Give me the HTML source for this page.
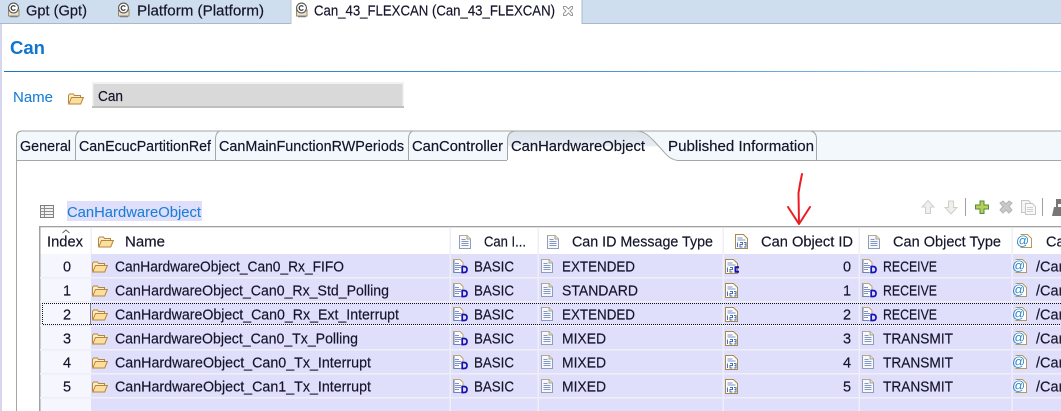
<!DOCTYPE html>
<html><head><meta charset="utf-8"><title>Can</title>
<style>
html,body{margin:0;padding:0;background:#fff;width:1061px;height:411px;overflow:hidden}
svg{display:block}
text{font-family:"Liberation Sans",sans-serif;font-size:14.5px;fill:#14142a;stroke:#14142a;stroke-width:.18px}
.b{fill:#1a7fd8;stroke:#1a7fd8;stroke-width:.08px}
.a{font-size:13px;fill:#2f86c8;stroke:none}
</style></head><body>
<svg width="1061" height="411" viewBox="0 0 1061 411" xmlns="http://www.w3.org/2000/svg">
<defs>
<linearGradient id="ln" x1="0" x2="1" y1="0" y2="0"><stop offset="0" stop-color="#1c76c4"/><stop offset=".6" stop-color="#4f97d6"/><stop offset="1" stop-color="#a8cbea"/></linearGradient>
<linearGradient id="at" x1="0" x2="0" y1="0" y2="1"><stop offset="0" stop-color="#dce4ec"/><stop offset=".5" stop-color="#e6ecf2"/><stop offset=".52" stop-color="#fff"/><stop offset="1" stop-color="#fff"/></linearGradient>
<symbol id="folder" width="16" height="12" viewBox="0 0 16 12"><path d="M.5 10.500V2.500l1-1.500h4l1 1.500h6v2" fill="#fbeecb" stroke="#b9853a"/><path d="M.8 11l2.600-6.500h12L12.700 11z" fill="#fbdf9f" stroke="#b9853a"/></symbol>
<symbol id="doc" width="12" height="14" viewBox="0 0 12 14"><path d="M.5.500h7.500l3.500 3.500v9.500H.5z" fill="#f7f8fc" stroke="#8f9dbb"/><path d="M.5.500h7.500l3.500 3.500" fill="none" stroke="#b8aa86"/><path d="M8 .5v3.500h3.500" fill="#e6e3d6" stroke="#a9a388"/><path d="M2.500 4.500h4M2.500 6.500h7M2.500 8.500h7M2.500 10.500h7" stroke="#8297c4"/></symbol>
<symbol id="docd" width="15" height="15" viewBox="0 0 15 15"><path d="M.5.500h6.500l3 3v10H.5z" fill="#fbfbff" stroke="#c2a468"/><path d="M2 4.500h4M2 6.500h6M2 8.500h6M2 10.500h4" stroke="#7e92c4"/><path d="M1 1v12.500h6" stroke="#6a85c4" fill="none"/><path d="M9.200 7.500h1.800q3 0 3 3t-3 3H9.200z" fill="#e0dffb" stroke="#1212b8" stroke-width="1.700"/></symbol>
<symbol id="num" width="13" height="15" viewBox="0 0 13 15"><path d="M.5.500h8l4 4v10H.5z" fill="#fdfdfb" stroke="#a5894e"/><path d="M2.500 4h5M2.500 6h8" stroke="#7e92c4"/><path d="M2.500 8.500v4.500M5 8.500h2.500v2H5v2.500h2.500M9 8.500h2v2H9.500h1.500v2.500H9" fill="none" stroke="#4c6fb5"/></symbol>
<symbol id="numc" width="15" height="15" viewBox="0 0 15 15"><path d="M.5.500h8l4 4v10H.5z" fill="#fdfdfb" stroke="#a5894e"/><path d="M2.500 4h5M2.500 6h8" stroke="#7e92c4"/><path d="M2.500 8.500v4.500M5 8.500h2.500v2H5v2.500h2.500" fill="none" stroke="#4c6fb5"/><path d="M14 8.200H10.500v4.600H14" fill="none" stroke="#1212b8" stroke-width="2"/></symbol>
<symbol id="ci" width="14" height="16" viewBox="0 0 14 16"><path d="M1.500 7.500v6.500h10.500V7.500" fill="#e8e2cf" stroke="#9a8a62"/><path d="M3 14.500h8" stroke="#7f7f7f" stroke-width="1.500"/><circle cx="6.500" cy="6" r="4.900" fill="#fff" stroke="#555" stroke-width="1.100"/><path d="M8.300 4.600A2.300 2.300 0 1 0 8.300 7.400" fill="none" stroke="#333" stroke-width="1.200"/></symbol>
<symbol id="at-b" width="14" height="14" viewBox="0 0 14 14"><path d="M2.500.500h7l4 4v9h-11" fill="#fff" stroke="#b59a5e"/></symbol>
</defs>

<!-- Top editor tab bar -->
<rect x="0" y="0" width="1061" height="23" fill="#cfdeee"/>
<rect x="0" y="23" width="1061" height="1" fill="#a9b8cc"/>
<rect x="291" y="0" width="291" height="24" fill="#fff"/>
<rect x="290.500" y="0" width="1" height="24" fill="#b9c6d6"/>
<rect x="581.500" y="0" width="1" height="24" fill="#a9b8cc"/>
<rect x="0" y="24" width="2" height="387" fill="#d6d6ee"/>
<use href="#ci" x="7" y="2"/>
<text x="26" y="15.500" textLength="61" lengthAdjust="spacingAndGlyphs">Gpt (Gpt)</text>
<use href="#ci" x="117" y="2"/>
<text x="137" y="15.500" textLength="127" lengthAdjust="spacingAndGlyphs">Platform (Platform)</text>
<use href="#ci" x="295" y="2"/>
<text x="314" y="15.500" textLength="241" lengthAdjust="spacingAndGlyphs">Can_43_FLEXCAN (Can_43_FLEXCAN)</text>
<path d="M563.500 6.500l2.500 0 2.500 2.500 2.500-2.500h1.500v2l-2.500 2.500 2.500 2.500v2h-1.500l-2.500-2.500-2.500 2.500h-2.500v-2l2.500-2.500-2.500-2.500z" fill="#fff" stroke="#9a9a9a"/>

<!-- Header -->
<text x="10" y="54" style="font-size:18px;font-weight:700;fill:#0f75cf;stroke:none" textLength="35" lengthAdjust="spacingAndGlyphs">Can</text>
<rect x="4" y="71" width="1057" height="1" fill="url(#ln)"/>
<text class="b" x="13" y="102" textLength="40" lengthAdjust="spacingAndGlyphs">Name</text>
<use href="#folder" x="68" y="93"/>
<rect x="92" y="82" width="312" height="26" fill="#f2f2f2"/>
<rect x="93.500" y="84" width="309" height="22" fill="#d9d9d9"/>
<rect x="92" y="106.500" width="312" height="1" fill="#8c8c8c"/>
<text x="98" y="101" textLength="25" lengthAdjust="spacingAndGlyphs">Can</text>

<!-- Inner tab folder -->
<path d="M16.500 411V137q0-6 6-6H1061" fill="#fff" stroke="#a6a6a6"/>
<path d="M17 160V137q0-5.500 5.500-5.500H1061V160z" fill="#f3f8fd"/>
<path d="M16.500 411V137q0-6 6-6H1061" fill="none" stroke="#a6a6a6"/>
<path d="M16.500 160.500H507M677 160.500H1061" stroke="#a6a6a6"/>
<path d="M75.500 160V139q0-6 4-8M215.500 160V139q0-6 4-8M408.500 160V139q0-6 4-8M816.500 160V139q0-7-6-8" fill="none" stroke="#a6a6a6"/>
<path d="M507.500 161V140q0-9 9-9H636c8 0 12 4 18 10l10 11c4 5 8 9 14 9z" fill="url(#at)"/>
<path d="M507.500 160V140q0-9 9-9H636c8 0 12 4 18 10l10 11c4 5 8 8 14 8.500" fill="none" stroke="#a6a6a6"/>
<text x="20" y="151" textLength="51" lengthAdjust="spacingAndGlyphs">General</text>
<text x="79" y="151" textLength="132" lengthAdjust="spacingAndGlyphs">CanEcucPartitionRef</text>
<text x="219" y="151" textLength="185" lengthAdjust="spacingAndGlyphs">CanMainFunctionRWPeriods</text>
<text x="412" y="151" textLength="91" lengthAdjust="spacingAndGlyphs">CanController</text>
<text x="511" y="151" textLength="134" lengthAdjust="spacingAndGlyphs">CanHardwareObject</text>
<text x="668" y="151" textLength="146" lengthAdjust="spacingAndGlyphs">Published Information</text>

<!-- Section title -->
<rect x="40.500" y="205.500" width="13" height="12" fill="#f2f2f2" stroke="#7c7c7c"/>
<path d="M40 208.500h14M40 211.500h14M40 214.500h14M44.500 206v11" stroke="#8c8c8c" fill="none"/>
<rect x="67" y="201" width="135" height="20" fill="#e0dffb"/>
<text class="b" x="67" y="217" textLength="134" lengthAdjust="spacingAndGlyphs">CanHardwareObject</text>

<!-- Toolbar -->
<path d="M928 200.500l6 6.500h-3.500v6.500h-5V207H922z" fill="#f0f0ea" stroke="#cfcfcf"/>
<path d="M951 214l6-6.500h-3.500V201h-5v6.500H945z" fill="#f0f0ea" stroke="#cfcfcf"/>
<rect x="965" y="198" width="1" height="18" fill="#a0a0a0"/>
<path d="M980 201h4v4h4.500v4H984v4.500h-4V209h-4.500v-4h4.500z" fill="#b9cf55" stroke="#4f8a3a"/>
<path d="M1000 203l3-2 3 3 3-3 3 2-3 3.500 3 3.500-3 3-3-3-3 3-3-3 3-3.500z" fill="#c9c9c9" stroke="#b3b3b3"/>
<path d="M1021.500 200.500h7l2 2v10h-9z" fill="#f4f4f4" stroke="#c6c6c6"/>
<path d="M1025.500 203.500h7l3 3v8h-10z" fill="#f9f9f9" stroke="#c6c6c6"/>
<path d="M1027 207.500h6M1027 209.500h6M1027 211.500h6" stroke="#cfcfcf"/>
<rect x="1042" y="198" width="1" height="18" fill="#a0a0a0"/>
<path d="M1056 199h5v5h-3v3h3v9h-9l2-9h2z" fill="#777"/>

<!-- Table -->
<rect x="40" y="254" width="1021" height="157" fill="#e0dffb"/>
<rect x="40" y="254" width="51" height="157" fill="#f6f6ff"/>
<rect x="39" y="226" width="1.500" height="185" fill="#a0a0a0"/>
<rect x="39" y="226" width="1022" height="1.300" fill="#a0a0a0"/>
<g fill="#efeff7">
<rect x="40" y="277" width="1021" height="1.500"/><rect x="40" y="301" width="1021" height="1.500"/><rect x="40" y="325" width="1021" height="1.500"/><rect x="40" y="349" width="1021" height="1.500"/><rect x="40" y="373" width="1021" height="1.500"/><rect x="40" y="397" width="1021" height="1.500"/>
<rect x="449.500" y="228" width="1.500" height="183"/><rect x="537.500" y="228" width="1.500" height="183"/><rect x="722.500" y="228" width="1.500" height="183"/><rect x="858.500" y="228" width="1.500" height="183"/><rect x="1011.500" y="228" width="1.500" height="183"/><rect x="90.500" y="228" width="1.500" height="26"/>
</g>

<!-- Header row -->
<path d="M62.500 233l3.500-3 3.500 3" fill="none" stroke="#666"/>
<text x="47" y="246.500" textLength="36" lengthAdjust="spacingAndGlyphs">Index</text>
<use href="#folder" x="98" y="236"/>
<text x="125" y="246.500" textLength="40" lengthAdjust="spacingAndGlyphs">Name</text>
<use href="#doc" x="459" y="235"/>
<text x="484" y="246.500" textLength="42" lengthAdjust="spacingAndGlyphs">Can I...</text>
<use href="#doc" x="547" y="235"/>
<text x="572" y="246.500" textLength="141" lengthAdjust="spacingAndGlyphs">Can ID Message Type</text>
<use href="#num" x="735" y="234"/>
<text x="761" y="246.500" textLength="92" lengthAdjust="spacingAndGlyphs">Can Object ID</text>
<use href="#doc" x="868" y="235"/>
<text x="893" y="246.500" textLength="108" lengthAdjust="spacingAndGlyphs">Can Object Type</text>
<use href="#at-b" x="1018" y="234"/><text class="a" x="1016" y="245">@</text>
<text x="1046" y="246.500">Ca</text>

<!-- Row 0 -->
<text x="63" y="271.500">0</text><use href="#folder" x="92" y="261"/>
<text x="115" y="271.500" textLength="229" lengthAdjust="spacingAndGlyphs">CanHardwareObject_Can0_Rx_FIFO</text>
<use href="#docd" x="453" y="259"/><text x="474" y="271.500" textLength="40" lengthAdjust="spacingAndGlyphs">BASIC</text>
<use href="#doc" x="541" y="259"/><text x="562" y="271.500" textLength="73" lengthAdjust="spacingAndGlyphs">EXTENDED</text>
<use href="#numc" x="725" y="259"/><text x="843" y="271.500">0</text>
<use href="#docd" x="862" y="259"/><text x="883" y="271.500" textLength="54" lengthAdjust="spacingAndGlyphs">RECEIVE</text>
<use href="#at-b" x="1013" y="259"/><text class="a" x="1012" y="270">@</text><text x="1036" y="271.500">/Can</text>
<!-- Row 1 -->
<text x="63" y="295.500">1</text><use href="#folder" x="92" y="285"/>
<text x="115" y="295.500" textLength="274" lengthAdjust="spacingAndGlyphs">CanHardwareObject_Can0_Rx_Std_Polling</text>
<use href="#docd" x="453" y="283"/><text x="474" y="295.500" textLength="40" lengthAdjust="spacingAndGlyphs">BASIC</text>
<use href="#doc" x="541" y="283"/><text x="562" y="295.500" textLength="76" lengthAdjust="spacingAndGlyphs">STANDARD</text>
<use href="#num" x="725" y="283"/><text x="843" y="295.500">1</text>
<use href="#docd" x="862" y="283"/><text x="883" y="295.500" textLength="54" lengthAdjust="spacingAndGlyphs">RECEIVE</text>
<use href="#at-b" x="1013" y="283"/><text class="a" x="1012" y="294">@</text><text x="1036" y="295.500">/Can</text>
<!-- Row 2 -->
<text x="63" y="319.500">2</text><use href="#folder" x="92" y="309"/>
<text x="115" y="319.500" textLength="284" lengthAdjust="spacingAndGlyphs">CanHardwareObject_Can0_Rx_Ext_Interrupt</text>
<use href="#docd" x="453" y="307"/><text x="474" y="319.500" textLength="40" lengthAdjust="spacingAndGlyphs">BASIC</text>
<use href="#doc" x="541" y="307"/><text x="562" y="319.500" textLength="73" lengthAdjust="spacingAndGlyphs">EXTENDED</text>
<use href="#num" x="725" y="307"/><text x="843" y="319.500">2</text>
<use href="#docd" x="862" y="307"/><text x="883" y="319.500" textLength="54" lengthAdjust="spacingAndGlyphs">RECEIVE</text>
<use href="#at-b" x="1013" y="307"/><text class="a" x="1012" y="318">@</text><text x="1036" y="319.500">/Can</text>
<!-- Row 3 -->
<text x="63" y="343.500">3</text><use href="#folder" x="92" y="333"/>
<text x="115" y="343.500" textLength="243" lengthAdjust="spacingAndGlyphs">CanHardwareObject_Can0_Tx_Polling</text>
<use href="#docd" x="453" y="331"/><text x="474" y="343.500" textLength="40" lengthAdjust="spacingAndGlyphs">BASIC</text>
<use href="#doc" x="541" y="331"/><text x="562" y="343.500" textLength="44" lengthAdjust="spacingAndGlyphs">MIXED</text>
<use href="#num" x="725" y="331"/><text x="843" y="343.500">3</text>
<use href="#doc" x="862" y="331"/><text x="883" y="343.500" textLength="70" lengthAdjust="spacingAndGlyphs">TRANSMIT</text>
<use href="#at-b" x="1013" y="331"/><text class="a" x="1012" y="342">@</text><text x="1036" y="343.500">/Can</text>
<!-- Row 4 -->
<text x="63" y="367.500">4</text><use href="#folder" x="92" y="357"/>
<text x="115" y="367.500" textLength="256" lengthAdjust="spacingAndGlyphs">CanHardwareObject_Can0_Tx_Interrupt</text>
<use href="#docd" x="453" y="355"/><text x="474" y="367.500" textLength="40" lengthAdjust="spacingAndGlyphs">BASIC</text>
<use href="#doc" x="541" y="355"/><text x="562" y="367.500" textLength="44" lengthAdjust="spacingAndGlyphs">MIXED</text>
<use href="#num" x="725" y="355"/><text x="843" y="367.500">4</text>
<use href="#doc" x="862" y="355"/><text x="883" y="367.500" textLength="70" lengthAdjust="spacingAndGlyphs">TRANSMIT</text>
<use href="#at-b" x="1013" y="355"/><text class="a" x="1012" y="366">@</text><text x="1036" y="367.500">/Can</text>
<!-- Row 5 -->
<text x="63" y="391.500">5</text><use href="#folder" x="92" y="381"/>
<text x="115" y="391.500" textLength="256" lengthAdjust="spacingAndGlyphs">CanHardwareObject_Can1_Tx_Interrupt</text>
<use href="#docd" x="453" y="379"/><text x="474" y="391.500" textLength="40" lengthAdjust="spacingAndGlyphs">BASIC</text>
<use href="#doc" x="541" y="379"/><text x="562" y="391.500" textLength="44" lengthAdjust="spacingAndGlyphs">MIXED</text>
<use href="#num" x="725" y="379"/><text x="843" y="391.500">5</text>
<use href="#doc" x="862" y="379"/><text x="883" y="391.500" textLength="70" lengthAdjust="spacingAndGlyphs">TRANSMIT</text>
<use href="#at-b" x="1013" y="379"/><text class="a" x="1012" y="390">@</text><text x="1036" y="391.500">/Can</text>

<!-- Focus dotted outline -->
<path d="M1061 303.500H42.500V324.500H1061M90.500 303.500V324.500" fill="none" stroke="#111" stroke-dasharray="1 1"/>

<!-- Red arrow -->
<path d="M802 174l-2 10-1.500 9 .5 31M788 207l11 17 11-17" fill="none" stroke="#ed1c24" stroke-width="2" stroke-linecap="round" stroke-linejoin="round"/>
</svg>
</body></html>
